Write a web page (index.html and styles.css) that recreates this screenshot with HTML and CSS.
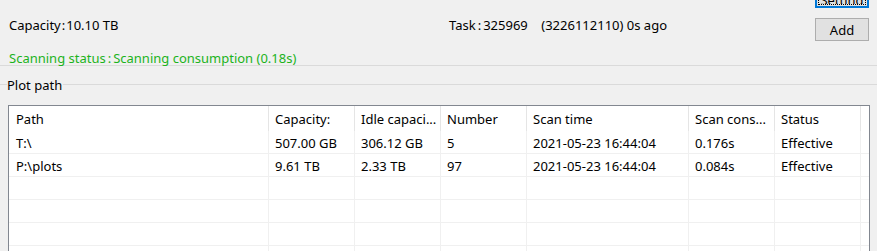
FILE: index.html
```html
<!DOCTYPE html>
<html>
<head>
<meta charset="utf-8">
<link rel="stylesheet" href="styles.css">
</head>
<body>
<div class="top">
  <div class="cap">Capacity<span class="colon narrow">:</span>10.10 TB</div>
  <div class="task">Task<span class="colon">:</span>325969    (3226112110) 0s ago</div>
  <div class="btns">
    <button class="btn focused"><span class="focus">Setting</span></button>
    <button class="btn">Add</button>
  </div>
</div>
<div class="status">Scanning status<span class="colon">:</span>Scanning consumption (0.18s)</div>
<div class="divider"></div>
<div class="legend"><span class="legend-text">Plot path</span></div>
<div class="list">
  <div class="row head">
    <div class="c first">Path</div>
    <div class="c">Capacity:</div>
    <div class="c">Idle capaci...</div>
    <div class="c">Number</div>
    <div class="c">Scan time</div>
    <div class="c">Scan cons...</div>
    <div class="c">Status</div>
    <div class="c filler"></div>
  </div>
  <div class="row">
    <div class="c first">T:\</div>
    <div class="c">507.00 GB</div>
    <div class="c">306.12 GB</div>
    <div class="c">5</div>
    <div class="c">2021-05-23 16:44:04</div>
    <div class="c">0.176s</div>
    <div class="c">Effective</div>
    <div class="c filler"></div>
  </div>
  <div class="row">
    <div class="c first">P:\plots</div>
    <div class="c">9.61 TB</div>
    <div class="c">2.33 TB</div>
    <div class="c">97</div>
    <div class="c">2021-05-23 16:44:04</div>
    <div class="c">0.084s</div>
    <div class="c">Effective</div>
    <div class="c filler"></div>
  </div>
  <div class="row empty"><div class="c first"></div><div class="c"></div><div class="c"></div><div class="c"></div><div class="c"></div><div class="c"></div><div class="c"></div><div class="c filler"></div></div>
  <div class="row empty"><div class="c first"></div><div class="c"></div><div class="c"></div><div class="c"></div><div class="c"></div><div class="c"></div><div class="c"></div><div class="c filler"></div></div>
  <div class="row empty"><div class="c first"></div><div class="c"></div><div class="c"></div><div class="c"></div><div class="c"></div><div class="c"></div><div class="c"></div><div class="c filler"></div></div>
  <div class="row empty"><div class="c first"></div><div class="c"></div><div class="c"></div><div class="c"></div><div class="c"></div><div class="c"></div><div class="c"></div><div class="c filler"></div></div>
  <div class="row empty"><div class="c first"></div><div class="c"></div><div class="c"></div><div class="c"></div><div class="c"></div><div class="c"></div><div class="c"></div><div class="c filler"></div></div>
</div>
</body>
</html>
```

FILE: styles.css
```css
html, body {
  margin: 0;
  padding: 0;
  background: #f0f0f0;
  overflow: hidden;
}
body {
  font-family: "Noto Sans", "Open Sans", sans-serif;
  font-size: 13px;
  line-height: 16px;
  color: #000;
  width: 877px;
  height: 251px;
}
.top {
  display: flex;
  height: 50px;
}
.cap {
  width: 440px;
  padding: 17px 0 0 9px;
}
.task {
  flex: 1;
  padding-top: 17px;
  white-space: pre;
}
.colon {
  margin: 0 2px 0 2px;
}
.colon.narrow {
  margin: 0 1px 0 1px;
}
.btns {
  width: 62px;
  display: flex;
  flex-direction: column;
  gap: 10px;
  margin-top: -15px;
}
.btn {
  box-sizing: border-box;
  width: 54px;
  height: 23px;
  background: #e1e1e1;
  border: 1px solid #adadad;
  font-family: inherit;
  font-size: 13px;
  line-height: 16px;
  padding: 0;
  color: #000;
}
.btn.focused {
  border: 2px solid #0078d7;
  padding: 1px;
}
.focus {
  display: block;
  box-sizing: border-box;
  height: 17px;
  border: 1px dotted #000;
  line-height: 16px;
  padding-top: 3px;
  overflow: hidden;
}
.status {
  color: #1cb31c;
  padding-left: 9px;
  height: 15px;
}
.divider {
  height: 1px;
  background: #dadada;
}
.legend {
  display: flex;
  align-items: center;
  margin-top: 11px;
  height: 16px;
}
.legend::before {
  content: "";
  width: 7px;
  height: 1px;
  background: #dadada;
  margin-top: -2px;
}
.legend::after {
  content: "";
  flex: 1;
  height: 1px;
  background: #dadada;
  margin-top: -2px;
}
.legend-text {
  padding-right: 1px;
}
.list {
  margin: 12px 0 0 8px;
  width: 862px;
  height: 200px;
  box-sizing: border-box;
  border: 1px solid #828790;
  background: #fff;
}
.row {
  display: grid;
  grid-template-columns: 260px 86px 86px 86px 162px 86px 86px 1fr;
  height: 23px;
}
.row .c {
  box-sizing: border-box;
  border-right: 1px solid #f0f0f0;
  border-bottom: 1px solid #f0f0f0;
  padding: 4px 0 0 6px;
  white-space: nowrap;
  overflow: hidden;
}
.row .c.first {
  padding-left: 7px;
}
.row .c.filler {
  border-right: none;
}
.row.head {
  height: 25px;
}
.row.head .c {
  border-bottom: none;
  border-right: 1px solid #e5e5e5;
  padding-top: 5px;
}
.row.head .c.filler {
  border-right: none;
}
```
